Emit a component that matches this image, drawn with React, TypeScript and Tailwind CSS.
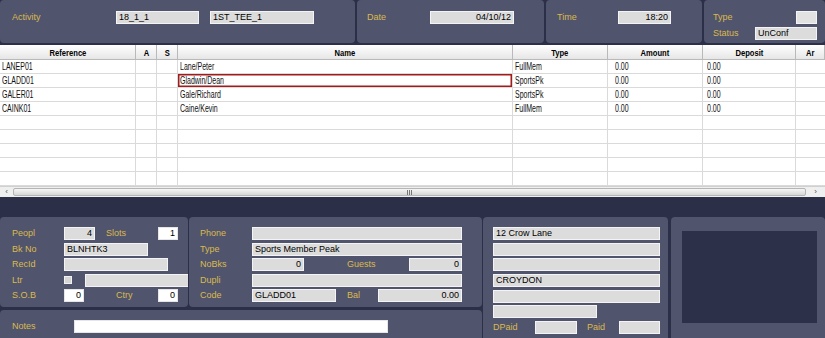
import React from "react";

const label = "text-[#dbb94e] text-[9px] leading-[13px] shrink-0";
const grey = "h-[13px] shrink-0 bg-[#dcdcdc] border border-[#f4f4f4] text-black text-[9px] leading-[11px] px-[2px] overflow-hidden whitespace-nowrap";
const white = "h-[13px] shrink-0 bg-white border border-[#e6e6e6] text-black text-[9px] leading-[11px] px-[2px] overflow-hidden whitespace-nowrap";
const panel = "bg-[#50556d] rounded-[4px]";

const columns = ["Reference", "A", "S", "Name", "Type", "Amount", "Deposit", "Ar"];

const rows = [
  { ref: "LANEP01", name: "Lane/Peter", type: "FullMem", amount: "0.00", deposit: "0.00" },
  { ref: "GLADD01", name: "Gladwin/Dean", type: "SportsPk", amount: "0.00", deposit: "0.00" },
  { ref: "GALER01", name: "Gale/Richard", type: "SportsPk", amount: "0.00", deposit: "0.00" },
  { ref: "CAINK01", name: "Caine/Kevin", type: "FullMem", amount: "0.00", deposit: "0.00" },
  null,
  null,
  null,
  null,
  null,
];

function TopBand() {
  return (
    <div className="flex h-[43px] gap-[2px]">
      <div className={`${panel} w-[355px] flex items-start pt-[11px] pl-[12px]`}>
        <span className={`${label} w-[104px]`}>Activity</span>
        <div className={`${grey} w-[83px]`}>18_1_1</div>
        <div className={`${grey} w-[104px] ml-[11px]`}>1ST_TEE_1</div>
      </div>
      <div className={`${panel} w-[187px] flex items-start pt-[11px] pl-[10px]`}>
        <span className={`${label} w-[63px]`}>Date</span>
        <div className={`${grey} w-[84px] text-right`}>04/10/12</div>
      </div>
      <div className={`${panel} w-[156px] flex items-start pt-[11px] pl-[11px]`}>
        <span className={`${label} w-[61px]`}>Time</span>
        <div className={`${grey} w-[53px] text-right`}>18:20</div>
      </div>
      <div className={`${panel} flex-1 flex flex-col pt-[11px] pl-[9px] gap-[3px]`}>
        <div className="flex">
          <span className={`${label} w-[83px]`}>Type</span>
          <div className={`${grey} w-[21px] bg-[#e2e2e2]`}></div>
        </div>
        <div className="flex">
          <span className={`${label} w-[42px]`}>Status</span>
          <div className={`${grey} w-[62px]`}>UnConf</div>
        </div>
      </div>
    </div>
  );
}

function Cell({ text, extra = "" }: { text?: string; extra?: string }) {
  return (
    <div className={`h-[14px] border-r border-b border-[#dadada] text-[10px] leading-[14px] text-[#111] px-[2px] whitespace-nowrap overflow-hidden ${extra}`}>
      {text && <span className="inline-block origin-left scale-x-[0.7]">{text}</span>}
    </div>
  );
}

function Grid() {
  const cols = "grid grid-cols-[136px_21px_21px_335px_95px_95px_93px_29px]";
  return (
    <div className="mt-[2px] h-[152px] bg-white flex flex-col">
      <div className={`${cols} h-[15px]`}>
        {columns.map((c) => (
          <div
            key={c}
            className="border-r border-b border-[#b9b9b9] bg-gradient-to-b from-white to-[#e6e6e6] text-center text-[9.5px] font-bold leading-[15px] text-black whitespace-nowrap overflow-hidden"
          >
            <span className="inline-block scale-x-[0.8]">{c}</span>
          </div>
        ))}
      </div>
      {rows.map((r, i) => (
        <div key={i} className={cols}>
          <Cell text={r?.ref} />
          <Cell />
          <Cell />
          <Cell text={r?.name} extra={i === 1 ? "shadow-[inset_0_0_0_1.5px_#a31a1a]" : ""} />
          <Cell text={r?.type} />
          <Cell text={r?.amount} extra="pl-[7px]" />
          <Cell text={r?.deposit} extra="pl-[4px]" />
          <Cell extra="border-r-0" />
        </div>
      ))}
      <div className="h-[11px] flex bg-[#efefef] border-t border-[#d0d0d0]">
        <div className="w-[13px] flex items-center justify-center text-[8px] leading-none text-[#555]">‹</div>
        <div className="flex-1 my-[1px] rounded-[2px] border border-[#b5b5b5] bg-gradient-to-b from-[#f6f6f6] to-[#d6d6d6] flex items-center justify-center">
          <div className="flex gap-[1px]">
            <div className="w-[1px] h-[5px] bg-[#777]"></div>
            <div className="w-[1px] h-[5px] bg-[#777]"></div>
            <div className="w-[1px] h-[5px] bg-[#777]"></div>
          </div>
        </div>
        <div className="w-[19px] flex items-center justify-center text-[8px] leading-none text-[#555]">›</div>
      </div>
    </div>
  );
}

function Bottom() {
  return (
    <div className="mt-[20px] h-[121px] flex">
      <div className="w-[482px] flex flex-col gap-[3px]">
        <div className="h-[90px] flex gap-[1px]">
          <div className={`${panel} w-[188px] overflow-hidden flex flex-col gap-[2.6px] pt-[10px] pl-[12px]`}>
            <div className="flex">
              <span className={`${label} w-[52px]`}>Peopl</span>
              <div className={`${grey} w-[31px] text-right`}>4</div>
              <span className={`${label} w-[52px] ml-[11px]`}>Slots</span>
              <div className={`${white} w-[20px] text-right`}>1</div>
            </div>
            <div className="flex">
              <span className={`${label} w-[52px]`}>Bk No</span>
              <div className={`${grey} w-[84px]`}>BLNHTK3</div>
            </div>
            <div className="flex">
              <span className={`${label} w-[52px]`}>RecId</span>
              <div className={`${grey} w-[104px]`}></div>
            </div>
            <div className="flex items-center">
              <span className={`${label} w-[52px]`}>Ltr</span>
              <div className="w-[8px] h-[8px] shrink-0 bg-[#d6d6d6] border border-[#f0f0f0]"></div>
              <div className={`${grey} w-[104px] ml-[13px]`}></div>
            </div>
            <div className="flex">
              <span className={`${label} w-[52px]`}>S.O.B</span>
              <div className={`${white} w-[20px] text-right`}>0</div>
              <span className={`${label} w-[42px] ml-[32px]`}>Ctry</span>
              <div className={`${white} w-[20px] text-right`}>0</div>
            </div>
          </div>
          <div className={`${panel} flex-1 flex flex-col gap-[2.6px] pt-[10px] pl-[11px]`}>
            <div className="flex">
              <span className={`${label} w-[52px]`}>Phone</span>
              <div className={`${grey} w-[210px]`}></div>
            </div>
            <div className="flex">
              <span className={`${label} w-[52px]`}>Type</span>
              <div className={`${grey} w-[210px]`}>Sports Member Peak</div>
            </div>
            <div className="flex">
              <span className={`${label} w-[52px]`}>NoBks</span>
              <div className={`${grey} w-[52px] text-right`}>0</div>
              <span className={`${label} w-[62px] ml-[43px]`}>Guests</span>
              <div className={`${grey} w-[53px] text-right`}>0</div>
            </div>
            <div className="flex">
              <span className={`${label} w-[52px]`}>Dupli</span>
              <div className={`${grey} w-[210px]`}></div>
            </div>
            <div className="flex">
              <span className={`${label} w-[52px]`}>Code</span>
              <div className={`${grey} w-[84px]`}>GLADD01</div>
              <span className={`${label} w-[31px] ml-[11px]`}>Bal</span>
              <div className={`${grey} w-[84px] text-right`}>0.00</div>
            </div>
          </div>
        </div>
        <div className={`${panel} rounded-b-none flex-1 flex items-start pt-[10px] pl-[12px]`}>
          <span className={`${label} w-[62px]`}>Notes</span>
          <div className={`${white} w-[314px]`}></div>
        </div>
      </div>
      <div className={`${panel} rounded-b-none ml-[1px] w-[185px] flex flex-col gap-[2.7px] pt-[10px] pl-[10px]`}>
        <div className={`${grey} w-[167px]`}>12 Crow Lane</div>
        <div className={`${grey} w-[167px]`}></div>
        <div className={`${grey} w-[167px]`}></div>
        <div className={`${grey} w-[167px]`}>CROYDON</div>
        <div className={`${grey} w-[167px]`}></div>
        <div className={`${grey} w-[104px]`}></div>
        <div className="flex">
          <span className={`${label} w-[42px]`}>DPaid</span>
          <div className={`${grey} w-[42px]`}></div>
          <span className={`${label} w-[32px] ml-[10px]`}>Paid</span>
          <div className={`${grey} w-[41px]`}></div>
        </div>
      </div>
      <div className={`${panel} rounded-b-none ml-[3px] flex-1 pt-[14px] pl-[11px]`}>
        <div className="w-[135px] h-[92px] bg-[#2c3049]"></div>
      </div>
    </div>
  );
}

export default function App() {
  return (
    <div
      className="w-[825px] h-[338px] overflow-hidden bg-[#2b2f48] flex flex-col"
      style={{ fontFamily: '"Liberation Sans", Arial, sans-serif' }}
    >
      <TopBand />
      <Grid />
      <Bottom />
    </div>
  );
}
